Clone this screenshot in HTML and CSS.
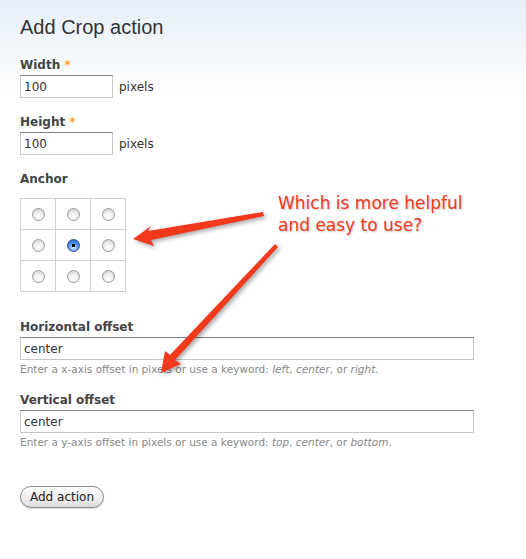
FILE: index.html
```html
<!DOCTYPE html>
<html lang="en">
<head>
    <meta charset="UTF-8">
    <title>Add Crop action</title>
    <link rel="stylesheet" href="styles.css">
</head>
<body>
    <div class="page">
        <h1 class="title">Add Crop action</h1>

        <form class="crop-form" onsubmit="return false;">
            <!-- Size fields -->
            <div class="form-item">
                <label class="form-label" for="width">Width <span class="required">*</span></label>
                <div class="inline-field">
                    <input class="text-input small" type="text" id="width" value="100">
                    <span class="unit">pixels</span>
                </div>
            </div>

            <div class="form-item">
                <label class="form-label" for="height">Height <span class="required">*</span></label>
                <div class="inline-field">
                    <input class="text-input small" type="text" id="height" value="100">
                    <span class="unit">pixels</span>
                </div>
            </div>

            <!-- Anchor grid -->
            <div class="form-item anchor-item">
                <div class="form-label">Anchor</div>
                <table class="anchor-grid">
                    <tr>
                        <td><input type="radio" name="anchor"></td>
                        <td><input type="radio" name="anchor"></td>
                        <td><input type="radio" name="anchor"></td>
                    </tr>
                    <tr>
                        <td><input type="radio" name="anchor"></td>
                        <td><input type="radio" name="anchor" checked></td>
                        <td><input type="radio" name="anchor"></td>
                    </tr>
                    <tr>
                        <td><input type="radio" name="anchor"></td>
                        <td><input type="radio" name="anchor"></td>
                        <td><input type="radio" name="anchor"></td>
                    </tr>
                </table>
            </div>

            <!-- Offsets -->
            <div class="form-item offset-item">
                <label class="form-label" for="xoffset">Horizontal offset</label>
                <input class="text-input wide" type="text" id="xoffset" value="center">
                <div class="description">Enter a x-axis offset in pixels or use a keyword: <em>left</em>, <em>center</em>, or <em>right</em>.</div>
            </div>

            <div class="form-item offset-item">
                <label class="form-label" for="yoffset">Vertical offset</label>
                <input class="text-input wide" type="text" id="yoffset" value="center">
                <div class="description">Enter a y-axis offset in pixels or use a keyword: <em>top</em>, <em>center</em>, or <em>bottom</em>.</div>
            </div>

            <button class="submit-btn" type="submit">Add action</button>
        </form>
    </div>

    <!-- Annotation over the screenshot -->
    <div class="note">Which is more helpful<br>and easy to use?</div>
    <svg class="arrows" width="526" height="559" viewBox="0 0 526 559">
        <g fill="#f3391c">
            <!-- arrow to the anchor grid -->
            <polygon points="263,212 148,231 151,226 133,239 154,246 151,240 264,216"/>
            <!-- arrow to the offset field -->
            <polygon points="275,244 170,355 165,351 161,373 181,364 175,360 278,247"/>
        </g>
    </svg>
</body>
</html>
```

FILE: styles.css
```css
/* Reset */
* {
    box-sizing: border-box;
    margin: 0;
    padding: 0;
}

body {
    font-family: "DejaVu Sans", Verdana, sans-serif;
    color: #333;
    background: linear-gradient(#e6eef8 0px, #f3f7fb 50px, #ffffff 90px);
    background-repeat: no-repeat;
    background-color: #fff;
    width: 526px;
    height: 559px;
    position: relative;
    overflow: hidden;
}

.page {
    padding: 15px 20px 0 20px;
}

/* Title */
.title {
    font-family: "Liberation Sans", Arial, sans-serif;
    font-weight: normal;
    font-size: 20px;
    line-height: 24px;
    color: #333;
    margin-bottom: 18px;
}

/* Form items */
.form-item {
    margin-bottom: 16px;
}

.form-label {
    display: block;
    font-size: 12px;
    font-weight: bold;
    line-height: 16px;
    color: #444;
    margin-bottom: 2px;
}

.required {
    color: #f5a623;
}

.inline-field {
    display: flex;
    align-items: center;
    gap: 6px;
}

.unit {
    font-size: 12px;
    color: #333;
}

.text-input {
    font-family: "DejaVu Sans", Verdana, sans-serif;
    font-size: 12px;
    color: #333;
    height: 23px;
    padding: 2px 3px;
    border: 1px solid #c8c8c8;
    border-top-color: #7f7f7f;
    background: #fff;
}

.text-input.small {
    width: 93px;
}

.text-input.wide {
    width: 454px;
    display: block;
}

.description {
    font-size: 10.5px;
    color: #888;
    line-height: 14px;
    margin-top: 2px;
}

/* Anchor grid */
.anchor-item {
    margin-bottom: 27px;
}

.anchor-grid {
    border-collapse: collapse;
    margin-top: 11px;
}

.anchor-grid td {
    width: 35px;
    height: 31px;
    border: 1px solid #d0d0d0;
    text-align: center;
    vertical-align: middle;
}

.anchor-grid input {
    appearance: none;
    -webkit-appearance: none;
    display: block;
    margin: 0 auto;
    width: 13px;
    height: 13px;
    border-radius: 50%;
    border: 1px solid #9c9c9c;
    background: radial-gradient(circle at 50% 70%, #ffffff 0%, #f2f2f2 40%, #c8c8c8 100%);
}

.anchor-grid input:checked {
    border-color: #2f55a0;
    background: radial-gradient(circle, #000 0, #000 1.5px, transparent 2px),
                radial-gradient(circle at 50% 70%, #d8ecff 0%, #4f8fe8 50%, #1a4fb0 100%);
}

.offset-item {
    margin-bottom: 16px;
}

/* Button */
.submit-btn {
    margin-top: 21px;
    font-family: "DejaVu Sans", Verdana, sans-serif;
    font-size: 12px;
    color: #222;
    width: 84px;
    height: 22px;
    border: 1px solid #8c8c8c;
    border-radius: 11px;
    background: linear-gradient(#ffffff, #f0f0f0 50%, #dcdcdc);
    box-shadow: 0 1px 1px rgba(0, 0, 0, 0.15);
}

/* Annotation overlay */
.note {
    position: absolute;
    left: 278px;
    top: 192px;
    font-size: 17px;
    line-height: 22px;
    color: #ee3c1e;
    text-shadow: 1px 1px 2px rgba(0, 0, 0, 0.25);
}

.arrows {
    position: absolute;
    left: 0;
    top: 0;
    pointer-events: none;
    filter: drop-shadow(2px 2px 2px rgba(0, 0, 0, 0.35));
}
```
